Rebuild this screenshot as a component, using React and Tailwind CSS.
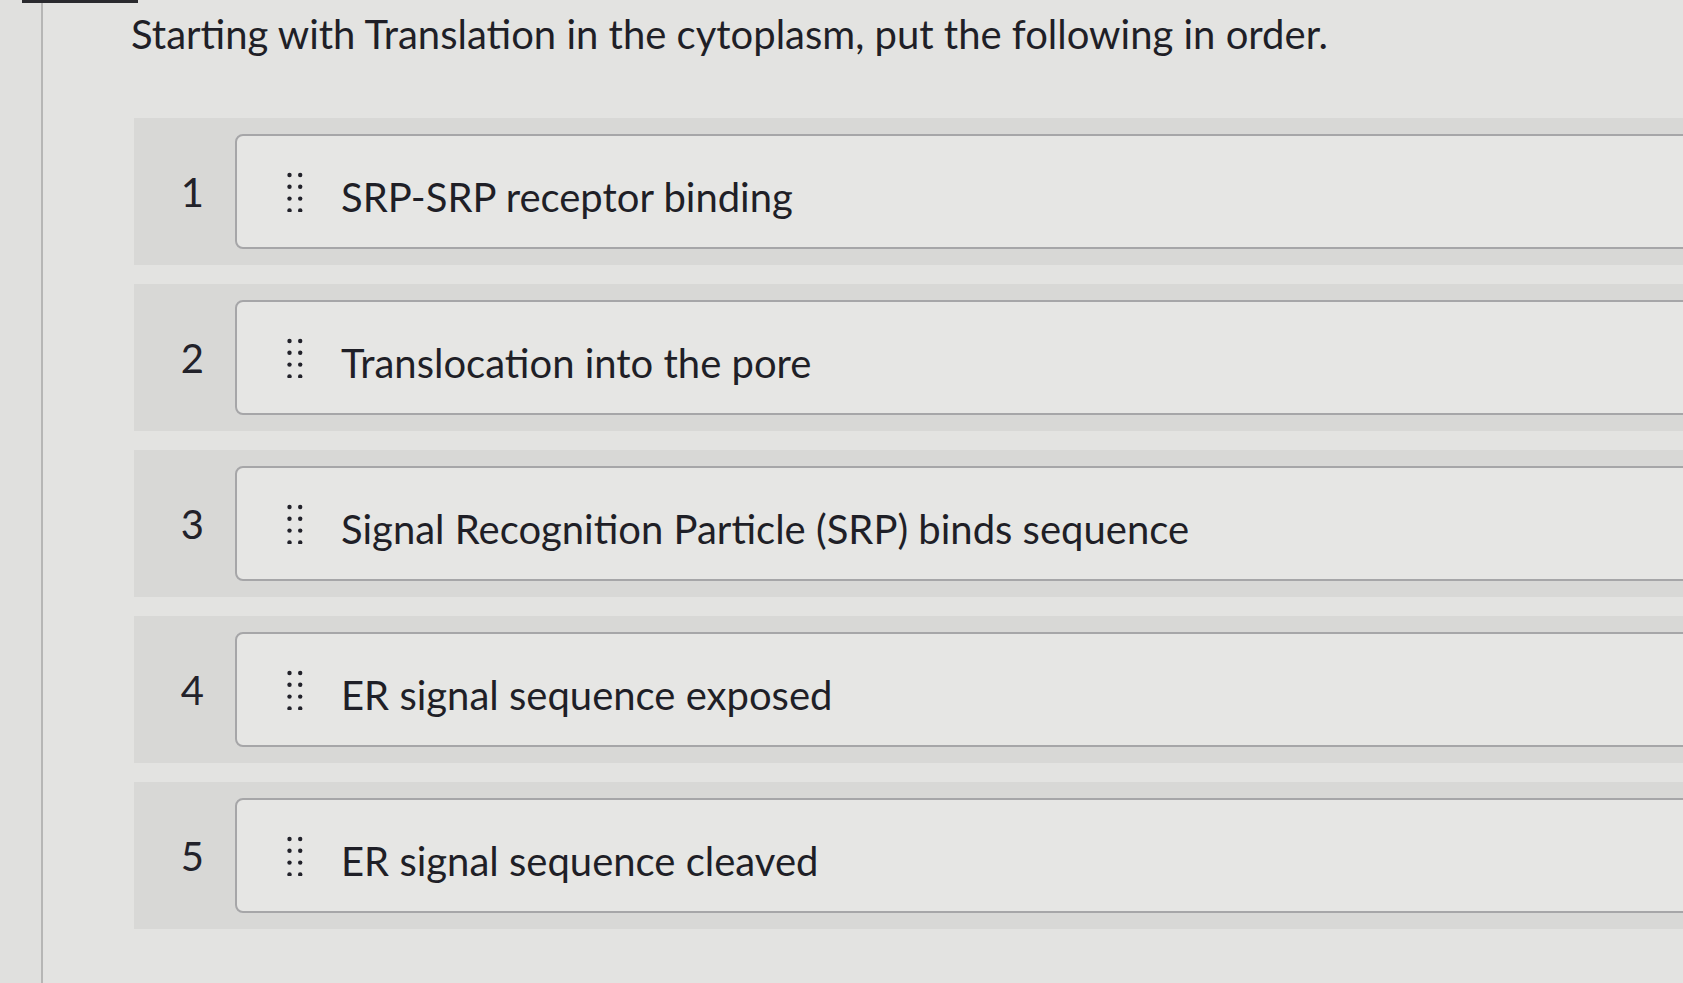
import React from "react";

// Ordering question: rows of draggable answer cards
const ITEMS = [
  "SRP-SRP receptor binding",
  "Translocation into the pore",
  "Signal Recognition Particle (SRP) binds sequence",
  "ER signal sequence exposed",
  "ER signal sequence cleaved",
];

const DragHandle = () => (
  <svg width="16" height="40" viewBox="0 0 16 40" className="shrink-0">
    {[0, 1, 2, 3].map((row) =>
      [0, 1].map((col) => (
        <circle
          key={`${row}-${col}`}
          cx={2.5 + col * 10.7}
          cy={3 + row * 11.8}
          r="2.2"
          fill="#22222a"
        />
      ))
    )}
  </svg>
);

const OrderRow = ({ index, label }) => (
  <div className="flex h-[147px] items-center bg-[#d8d8d6]">
    <div className="w-[101px] shrink-0 pr-[31px] text-right text-[40px] leading-none text-[#22222a]">
      {index}
    </div>
    <div className="flex h-[115px] w-[1500px] shrink-0 items-center rounded-lg border-2 border-[#a6a6a8] bg-[#e6e6e4] pl-[50px]">
      <DragHandle />
      <span className="ml-[38px] pt-[10px] text-[40px] leading-none text-[#1f1f27]">{label}</span>
    </div>
  </div>
);

export default function App() {
  return (
    <div className="relative flex h-[983px] w-full overflow-hidden bg-[#e3e3e1] font-['Lato','Liberation_Sans',sans-serif]">
      {/* active tab marker at the top edge */}
      <div className="absolute left-[22px] top-0 h-[3px] w-[116px] bg-[#2a2a2e]" />

      <div className="w-[43px] shrink-0 border-r-2 border-[#b6b6b5] bg-[#e0e0de]" />

      <main className="flex-1 pl-[88px]">
        <h1 className="pt-[10px] text-[40px] leading-[1.2] font-normal text-[#1f1f27]">
          Starting with Translation in the cytoplasm, put the following in order.
        </h1>

        <div className="ml-[3px] mt-[60px] flex flex-col gap-[19px]">
          {ITEMS.map((label, i) => (
            <OrderRow key={label} index={i + 1} label={label} />
          ))}
        </div>
      </main>
    </div>
  );
}
